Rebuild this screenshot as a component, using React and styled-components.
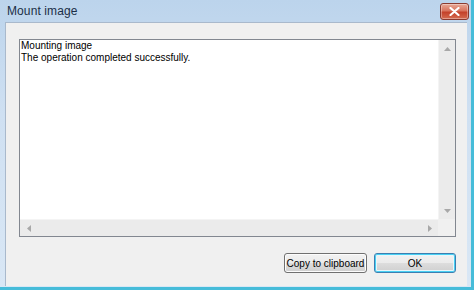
import styled, { createGlobalStyle } from "styled-components";

const GlobalStyle = createGlobalStyle`
  html, body {
    margin: 0;
    padding: 0;
    width: 474px;
    height: 290px;
    overflow: hidden;
  }

  body {
    font-family: "Liberation Sans", "DejaVu Sans", sans-serif;
  }
`;

const Window = styled.div`
  box-sizing: border-box;
  width: 474px;
  height: 290px;
  display: flex;
  flex-direction: column;

  background: linear-gradient(180deg, #bcd4ec 0%, #cfe0f2 40%, #d9e7f5 100%);
  border-right: 3px solid #46bcd9;
  border-bottom: 3px solid #46bcd9;
`;

const TitleBar = styled.div`
  height: 22px;
  display: flex;
  align-items: center;
  padding: 0 2px 0 7px;
  flex-shrink: 0;
`;

const Title = styled.div`
  flex: 1;
  font-size: 12px;
  color: #1b2f47;
  letter-spacing: 0.1px;
`;

const CloseButton = styled.div`
  box-sizing: border-box;
  width: 29px;
  height: 17px;
  margin-top: 1px;
  display: flex;
  align-items: center;
  justify-content: center;

  border: 1px solid #8a3a30;
  border-radius: 3px;
  background: linear-gradient(180deg, #e8a896 0%, #d8735d 45%, #c4412a 55%, #d56b50 100%);
  box-shadow: inset 0 0 0 1px rgba(255, 255, 255, 0.35);
`;

const Frame = styled.div`
  flex: 1;
  display: flex;
  padding: 0 4px 1px 5px;
`;

const Client = styled.div`
  flex: 1;
  display: flex;
  flex-direction: column;
  background: #f0f0f0;
  border-top: 1px solid #a9b9cc;
  border-left: 1px solid #a9b9cc;
  padding: 16px 11px 12px 13px;
`;

const TextBox = styled.div`
  box-sizing: border-box;
  height: 198px;
  display: grid;
  grid-template-columns: 1fr 17px;
  grid-template-rows: 1fr 17px;
  border: 1px solid #828790;
  background: #fff;
`;

const Content = styled.div`
  padding: 0 1px;
  font-size: 10px;
  line-height: 12px;
  color: #000;
`;

const ScrollBar = styled.div`
  display: flex;
  flex-direction: ${(props) => (props.$vertical ? "column" : "row")};
  justify-content: space-between;
  align-items: center;
  background: #ebebeb;
  border-left: ${(props) => (props.$vertical ? "1px solid #f4f4f4" : "none")};
  border-top: ${(props) => (props.$vertical ? "none" : "1px solid #f4f4f4")};
`;

const ScrollArrow = styled.div`
  width: 17px;
  height: 17px;
  display: flex;
  align-items: center;
  justify-content: center;
`;

const ScrollCorner = styled.div`
  background: #f0f0f0;
`;

const ButtonRow = styled.div`
  margin-top: 16px;
  display: flex;
  justify-content: flex-end;
  gap: 7px;
`;

const Button = styled.button`
  box-sizing: border-box;
  width: ${(props) => props.$width}px;
  height: 20px;
  padding: 0;
  white-space: nowrap;
  font-family: "Liberation Sans", "DejaVu Sans", sans-serif;
  font-size: 10px;
  color: #000;

  border-radius: 3px;
  border: 1px solid ${(props) => (props.$default ? "#3c7fb1" : "#707070")};
  background: linear-gradient(180deg, #f2f2f2 0%, #ebebeb 50%, #dddddd 51%, #cfcfcf 100%);
  box-shadow: ${(props) =>
    props.$default
      ? "inset 0 0 0 1px #48d0f3, inset 0 0 0 2px #e8f6fb"
      : "inset 0 0 0 1px #fcfcfc"};
`;

const Arrow = ({ dir }) => {
  const points = {
    up: "0,4 3.5,0 7,4",
    down: "0,0 3.5,4 7,0",
    left: "4,0 0,3.5 4,7",
    right: "0,0 4,3.5 0,7",
  }[dir];
  const horizontal = dir === "left" || dir === "right";
  return (
    <svg width={horizontal ? 4 : 7} height={horizontal ? 7 : 4} viewBox={horizontal ? "0 0 4 7" : "0 0 7 4"}>
      <polygon points={points} fill="#a8a8a8" />
    </svg>
  );
};

const CloseGlyph = () => (
  <svg width="11" height="9" viewBox="0 0 11 9">
    <path
      d="M1.5 1 L9.5 8 M9.5 1 L1.5 8"
      stroke="#fff"
      strokeWidth="2.2"
      strokeLinecap="round"
    />
  </svg>
);

export default function App() {
  return (
    <>
      <GlobalStyle />
      <Window>
        <TitleBar>
          <Title>Mount image</Title>
          <CloseButton>
            <CloseGlyph />
          </CloseButton>
        </TitleBar>
        <Frame>
          <Client>
            <TextBox>
              <Content>
                Mounting image
                <br />
                The operation completed successfully.
              </Content>
              <ScrollBar $vertical>
                <ScrollArrow>
                  <Arrow dir="up" />
                </ScrollArrow>
                <ScrollArrow>
                  <Arrow dir="down" />
                </ScrollArrow>
              </ScrollBar>
              <ScrollBar>
                <ScrollArrow>
                  <Arrow dir="left" />
                </ScrollArrow>
                <ScrollArrow>
                  <Arrow dir="right" />
                </ScrollArrow>
              </ScrollBar>
              <ScrollCorner />
            </TextBox>
            <ButtonRow>
              <Button $width={83}>Copy to clipboard</Button>
              <Button $width={82} $default>
                OK
              </Button>
            </ButtonRow>
          </Client>
        </Frame>
      </Window>
    </>
  );
}
